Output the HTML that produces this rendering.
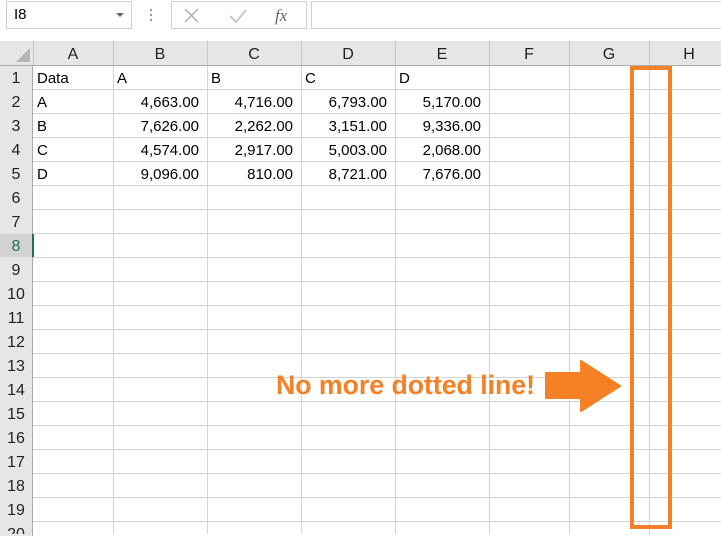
<!DOCTYPE html>
<html><head><style>
body{margin:0;width:721px;height:534px;overflow:hidden;background:#fff;font-family:"Liberation Sans",Arial,sans-serif;position:relative}
.a{position:absolute}
</style></head><body>
<div class="a" style="left:6px;top:1px;width:126px;height:28px;border:1px solid #d0d0d0;box-sizing:border-box;font-size:15px;line-height:26px;padding-left:7px">I8</div>
<div class="a" style="left:116px;top:13px;width:0;height:0;border-left:4px solid transparent;border-right:4px solid transparent;border-top:4px solid #666"></div>
<div class="a" style="left:150px;top:9px;width:2px;height:2px;background:#999;box-shadow:0 5px #999,0 10px #999"></div>
<div class="a" style="left:171px;top:1px;width:136px;height:28px;border:1px solid #d0d0d0;box-sizing:border-box"></div>
<svg class="a" style="left:183px;top:7px" width="110" height="18"><path d="M2 2L15 15M15 2L2 15" stroke="#b0b0b0" stroke-width="1.5"/><path d="M47 9L53 15L63 3" stroke="#c8c8c8" stroke-width="2" fill="none"/><text x="92" y="14" font-family="Liberation Serif" font-style="italic" font-size="17" fill="#666">fx</text></svg>
<div class="a" style="left:311px;top:1px;width:420px;height:28px;border:1px solid #d0d0d0;box-sizing:border-box"></div>
<div class="a" style="left:0;top:41px;width:721px;height:25px;background:#e6e6e6;border-bottom:1px solid #ababab;box-sizing:border-box"></div>
<div class="a" style="left:0;top:66px;width:33px;height:470px;background:#e6e6e6;border-right:1px solid #ababab;box-sizing:border-box"></div>
<svg class="a" style="left:15px;top:47px" width="16" height="16"><path d="M15 1L15 15L1 15Z" fill="#b4b4b4"/></svg>
<svg class="a" style="left:0;top:0" width="721" height="534">
<g stroke="#d4d4d4" stroke-width="1">
<line x1="113.5" y1="66" x2="113.5" y2="534"/><line x1="207.5" y1="66" x2="207.5" y2="534"/><line x1="301.5" y1="66" x2="301.5" y2="534"/><line x1="395.5" y1="66" x2="395.5" y2="534"/><line x1="489.5" y1="66" x2="489.5" y2="534"/><line x1="569.5" y1="66" x2="569.5" y2="534"/><line x1="649.5" y1="66" x2="649.5" y2="534"/>
</g>
<g stroke="#d4d4d4">
<line x1="33" y1="89.5" x2="721" y2="89.5"/><line x1="33" y1="113.5" x2="721" y2="113.5"/><line x1="33" y1="137.5" x2="721" y2="137.5"/><line x1="33" y1="161.5" x2="721" y2="161.5"/><line x1="33" y1="185.5" x2="721" y2="185.5"/><line x1="33" y1="209.5" x2="721" y2="209.5"/><line x1="33" y1="233.5" x2="721" y2="233.5"/><line x1="33" y1="257.5" x2="721" y2="257.5"/><line x1="33" y1="281.5" x2="721" y2="281.5"/><line x1="33" y1="305.5" x2="721" y2="305.5"/><line x1="33" y1="329.5" x2="721" y2="329.5"/><line x1="33" y1="353.5" x2="721" y2="353.5"/><line x1="33" y1="377.5" x2="721" y2="377.5"/><line x1="33" y1="401.5" x2="721" y2="401.5"/><line x1="33" y1="425.5" x2="721" y2="425.5"/><line x1="33" y1="449.5" x2="721" y2="449.5"/><line x1="33" y1="473.5" x2="721" y2="473.5"/><line x1="33" y1="497.5" x2="721" y2="497.5"/><line x1="33" y1="521.5" x2="721" y2="521.5"/>
</g>
<g stroke="#c6c6c6">
<line x1="33.5" y1="41" x2="33.5" y2="65"/><line x1="113.5" y1="41" x2="113.5" y2="65"/><line x1="207.5" y1="41" x2="207.5" y2="65"/><line x1="301.5" y1="41" x2="301.5" y2="65"/><line x1="395.5" y1="41" x2="395.5" y2="65"/><line x1="489.5" y1="41" x2="489.5" y2="65"/><line x1="569.5" y1="41" x2="569.5" y2="65"/><line x1="649.5" y1="41" x2="649.5" y2="65"/>
</g>
<g font-family="Liberation Sans" font-size="16" fill="#222" text-anchor="middle">
<text x="73" y="59">A</text><text x="160" y="59">B</text><text x="254" y="59">C</text><text x="348" y="59">D</text><text x="442" y="59">E</text><text x="529" y="59">F</text><text x="609" y="59">G</text><text x="689" y="59">H</text>
</g>
<rect x="0" y="234" width="33" height="23" fill="#d2d2d2"/>
<g font-family="Liberation Sans" font-size="16" fill="#222" text-anchor="middle">
<text x="16" y="83">1</text><text x="16" y="107">2</text><text x="16" y="131">3</text><text x="16" y="155">4</text><text x="16" y="179">5</text><text x="16" y="203">6</text><text x="16" y="227">7</text><text x="16" y="251" fill="#217346">8</text><text x="16" y="275">9</text><text x="16" y="299">10</text><text x="16" y="323">11</text><text x="16" y="347">12</text><text x="16" y="371">13</text><text x="16" y="395">14</text><text x="16" y="419">15</text><text x="16" y="443">16</text><text x="16" y="467">17</text><text x="16" y="491">18</text><text x="16" y="515">19</text><text x="16" y="539">20</text>
</g>
<rect x="32" y="234" width="2" height="23" fill="#217346"/>
<g font-family="Liberation Sans" font-size="15" fill="#000">
<text x="37" y="83">Data</text><text x="117" y="83">A</text><text x="211" y="83">B</text><text x="305" y="83">C</text><text x="399" y="83">D</text>
<text x="37" y="107">A</text><text x="37" y="131">B</text><text x="37" y="155">C</text><text x="37" y="179">D</text>
</g>
<g font-family="Liberation Sans" font-size="15" fill="#000" text-anchor="end">
<text x="199" y="107">4,663.00</text><text x="293" y="107">4,716.00</text><text x="387" y="107">6,793.00</text><text x="481" y="107">5,170.00</text>
<text x="199" y="131">7,626.00</text><text x="293" y="131">2,262.00</text><text x="387" y="131">3,151.00</text><text x="481" y="131">9,336.00</text>
<text x="199" y="155">4,574.00</text><text x="293" y="155">2,917.00</text><text x="387" y="155">5,003.00</text><text x="481" y="155">2,068.00</text>
<text x="199" y="179">9,096.00</text><text x="293" y="179">810.00</text><text x="387" y="179">8,721.00</text><text x="481" y="179">7,676.00</text>
</g>
<rect x="632" y="68" width="38" height="459" fill="none" stroke="#f58025" stroke-width="4"/>
<text x="276" y="394" font-family="Liberation Sans" font-weight="bold" font-size="27" fill="#f58025" textLength="259" lengthAdjust="spacingAndGlyphs">No more dotted line!</text>
<path d="M546 373H581V361L620 386L581 411V398H546Z" fill="#f58025" stroke="#f58025" stroke-linejoin="round" stroke-width="2"/>
</svg>
</body></html>
